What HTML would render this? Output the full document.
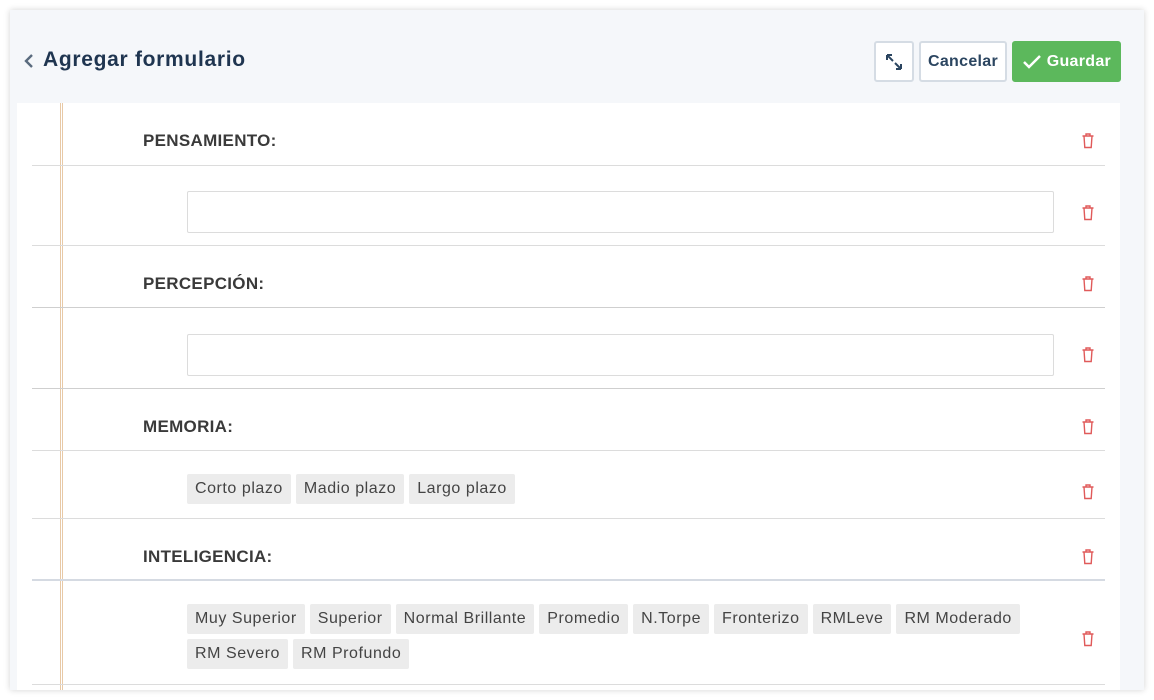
<!DOCTYPE html>
<html><head><meta charset="utf-8"><style>
*{box-sizing:border-box;margin:0;padding:0}
body{width:1154px;height:700px;background:#fff;font-family:"Liberation Sans",sans-serif;overflow:hidden;position:relative}
.card{position:absolute;left:10px;top:10px;width:1134px;height:680px;background:#f5f7fa;box-shadow:0 0 6px rgba(0,0,0,.18)}
.hdr{position:absolute;left:17px;top:21px;width:1103px;height:82px;background:#f5f7fa}
.title{position:absolute;left:43px;top:48px;font-size:21px;font-weight:bold;color:#1f3550;letter-spacing:.7px}
.chev{position:absolute;left:24px;top:53px}
.btn{position:absolute;top:41px;height:41px;border:2px solid #d5dce4;border-radius:3px;background:#fff;font-weight:bold;font-size:16px;color:#2b4560;display:flex;align-items:center;justify-content:center;letter-spacing:.3px}
.content{position:absolute;left:17px;top:103px;width:1103px;height:587px;background:#fff}
.vl{position:absolute;left:60px;top:103px;width:3px;height:587px;border-left:1px solid #e8c9a6;border-right:1px solid #e8c9a6}
.row{position:absolute;left:32px;width:1073px;border-bottom:1px solid #dcdcdc}
.lab{position:absolute;left:111px;font-weight:bold;font-size:17px;color:#3a3a3a;letter-spacing:.3px}
.inp{position:absolute;left:155px;width:867px;height:42px;border:1px solid #dcdcdc;border-radius:2px}
.tr{position:absolute;left:1048px}
.chips{position:absolute;left:155px;width:850px;display:flex;flex-wrap:wrap;gap:5px 5px}
.chip{background:#ececec;color:#444;font-size:16px;height:30px;line-height:30px;padding:0 8px;border-radius:2px;letter-spacing:.55px}
</style></head><body>
<div class="card"></div>
<div class="hdr"></div>
<svg class="chev" width="10" height="16" viewBox="0 0 10 16" fill="none" stroke="#5a6b7e" stroke-width="2.4"><path d="M8 2L2 8l6 6"/></svg>
<div class="title">Agregar formulario</div>
<div class="btn" style="left:874px;width:40px"><svg width="22" height="22" viewBox="0 0 22 22" fill="none" stroke="#2b4560" stroke-width="2"><path d="M4 4l6 6M4 4h5M4 4v5M18 18l-6-6M18 18h-5M18 18v-5"/></svg></div>
<div class="btn" style="left:919px;width:88px">Cancelar</div>
<div class="btn" style="left:1012px;width:109px;background:#5cb85c;border-color:#5cb85c;color:#fff"><svg width="20" height="18" viewBox="0 0 20 18" fill="none" stroke="#fff" stroke-width="2.5"><path d="M2 9l5 5L18 3"/></svg>&nbsp;Guardar</div>
<div class="content"></div>
<div class="vl"></div>
<svg width="0" height="0" style="position:absolute"><defs><g id="t"><path d="M2.5 4h11M6 4V2h4v2M4 4l.8 11.5h6.4L12 4" fill="none" stroke="#e05a5a" stroke-width="1.4"/></g></defs></svg>

<div class="row" style="top:103px;height:63px"><div class="lab" style="top:28px">PENSAMIENTO:</div><svg class="tr" style="top:29px" width="16" height="17"><use href="#t"/></svg></div>
<div class="row" style="top:166px;height:80px"><div class="inp" style="top:25px"></div><svg class="tr" style="top:38px" width="16" height="17"><use href="#t"/></svg></div>
<div class="row" style="top:246px;height:62px;border-bottom-color:#cfcfcf"><div class="lab" style="top:28px">PERCEPCIÓN:</div><svg class="tr" style="top:29px" width="16" height="17"><use href="#t"/></svg></div>
<div class="row" style="top:308px;height:81px;border-bottom-color:#cfcfcf"><div class="inp" style="top:26px"></div><svg class="tr" style="top:38px" width="16" height="17"><use href="#t"/></svg></div>
<div class="row" style="top:389px;height:62px"><div class="lab" style="top:28px">MEMORIA:</div><svg class="tr" style="top:29px" width="16" height="17"><use href="#t"/></svg></div>
<div class="row" style="top:451px;height:68px"><div class="chips" style="top:23px"><div class="chip">Corto plazo</div><div class="chip">Madio plazo</div><div class="chip">Largo plazo</div></div><svg class="tr" style="top:32px" width="16" height="17"><use href="#t"/></svg></div>
<div class="row" style="top:519px;height:62px;border-bottom:2px solid #d5dae2"><div class="lab" style="top:28px">INTELIGENCIA:</div><svg class="tr" style="top:29px" width="16" height="17"><use href="#t"/></svg></div>
<div class="row" style="top:581px;height:104px"><div class="chips" style="top:23px"><div class="chip">Muy Superior</div><div class="chip">Superior</div><div class="chip">Normal Brillante</div><div class="chip">Promedio</div><div class="chip">N.Torpe</div><div class="chip">Fronterizo</div><div class="chip">RMLeve</div><div class="chip">RM Moderado</div><div class="chip">RM Severo</div><div class="chip">RM Profundo</div></div><svg class="tr" style="top:49px" width="16" height="17"><use href="#t"/></svg></div>
</body></html>
